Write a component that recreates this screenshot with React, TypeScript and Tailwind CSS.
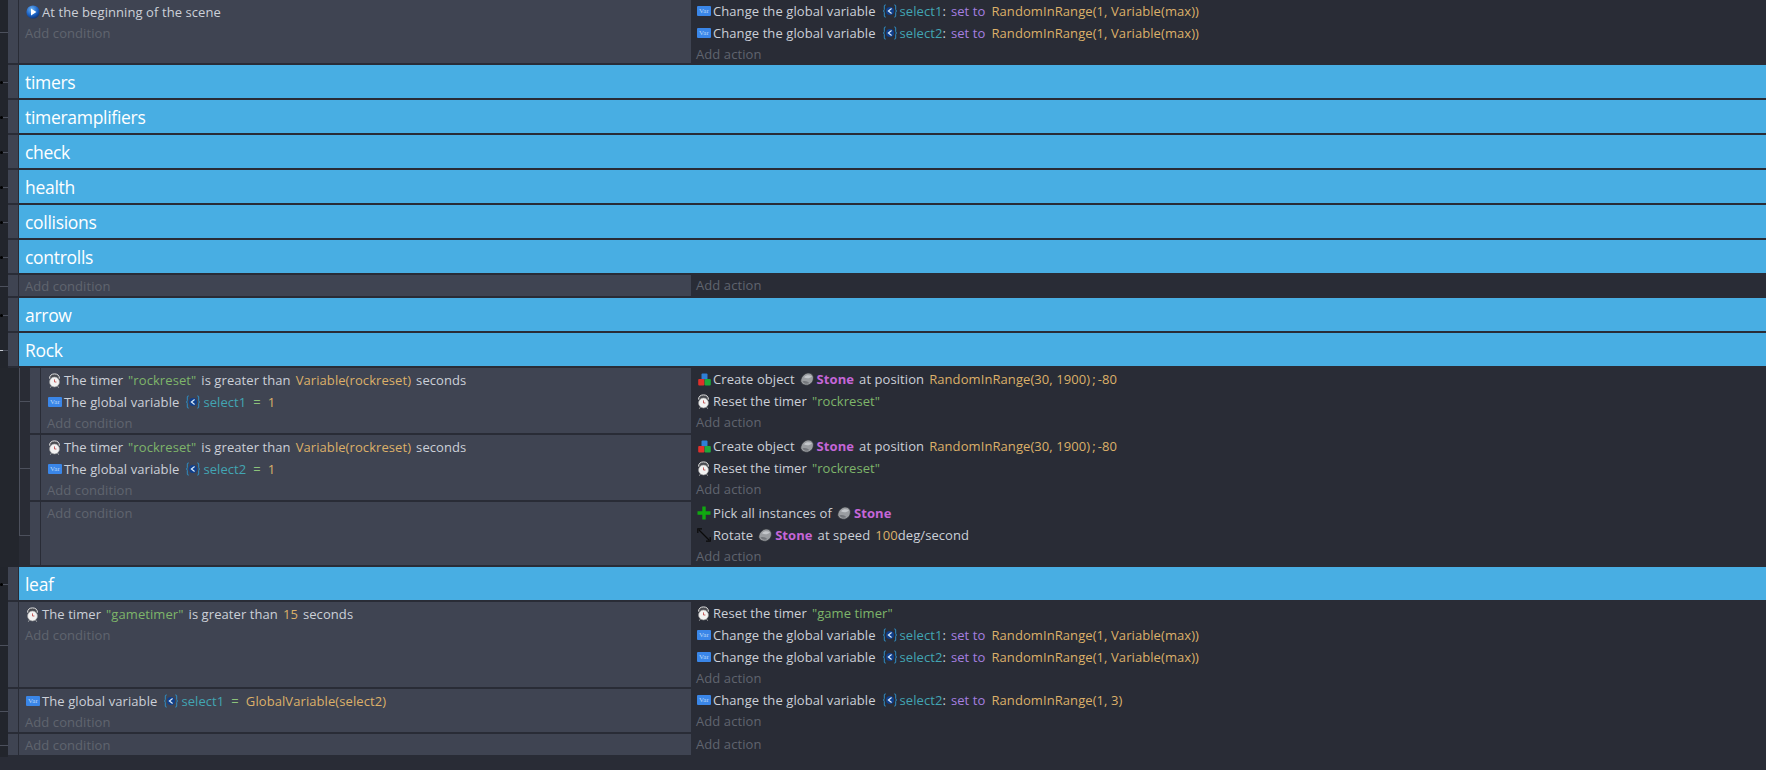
import React from "react";

const Var = () => (
    <svg width="14" height="10" viewBox="0 0 14 10" className="shrink-0 mr-[2px]">
        <rect width="14" height="10" rx="1" fill="#3a86e8" />
        <text x="7" y="7.4" fontSize="7" textAnchor="middle" fill="#b9d6f7" fontFamily="Liberation Serif, serif">Var</text>
    </svg>
);

const Timer = () => (
    <svg width="13" height="15" viewBox="0 0 13 15" className="shrink-0 mr-[3px]">
        <path d="M1.6 5.6 C1.4 2.6 3.4 0.9 6.5 0.9 C9.6 0.9 11.6 2.6 11.4 5.6" fill="#4a4c52" stroke="#e2e2e2" strokeWidth="1" />
        <circle cx="6.5" cy="9" r="4.9" fill="#f2f2f2" stroke="#a5a5a5" strokeWidth="0.6" />
        <path d="M6.5 6.4 V9 H8.4" fill="none" stroke="#c05050" strokeWidth="0.9" />
        <path d="M3.2 13.3 L2.4 14.6 M9.8 13.3 L10.6 14.6" stroke="#c8c8c8" strokeWidth="0.9" />
    </svg>
);

const Scope = () => (
    <svg width="14" height="14" viewBox="0 0 14 14" className="shrink-0 ml-[2px] mr-[3px]">
        <path d="M2.8 1 H2.1 Q1.3 1 1.3 2 V5.6 Q1.3 7 0.3 7 Q1.3 7 1.3 8.4 V12 Q1.3 13 2.1 13 H2.8" fill="none" stroke="#2e8dc4" strokeWidth="1" />
        <path d="M11.2 1 H11.9 Q12.7 1 12.7 2 V5.6 Q12.7 7 13.7 7 Q12.7 7 12.7 8.4 V12 Q12.7 13 11.9 13 H11.2" fill="none" stroke="#2e8dc4" strokeWidth="1" />
        <circle cx="7" cy="7" r="4" fill="#0f3f8c" />
        <path d="M8.6 4.6 L5.4 7 L8.6 9.4" fill="none" stroke="#d7e8f7" strokeWidth="1.2" />
    </svg>
);

const Stone = () => (
    <svg width="14" height="14" viewBox="0 0 14 14" className="shrink-0 mr-[3px]">
        <path d="M0.8 9.5 C0.5 6.5 2.5 3 6 1.4 C9 0.4 13.2 1.5 13.4 5.5 C13.6 9.5 11 12.6 7.5 13.2 C4.5 13.6 1.3 12 0.8 9.5 Z" fill="#9a9da1" stroke="#2f3238" strokeWidth="0.8" />
        <path d="M4 5.2 C6 3 9.5 2.6 12 4.6 C9.8 6.6 6.4 7 4 5.2 Z" fill="#c3c6ca" />
        <path d="M2.4 9.4 C5 8.4 7.4 9 9.4 11 C7.4 12.4 4 11.8 2.4 9.4 Z" fill="#74777c" />
    </svg>
);

const SceneStart = () => (
    <svg width="14" height="14" viewBox="0 0 14 14" className="shrink-0 mr-[2px]">
        <defs>
            <radialGradient id="ball" cx="40%" cy="30%" r="75%">
                <stop offset="0%" stopColor="#6fb4f2" />
                <stop offset="60%" stopColor="#1b62c4" />
                <stop offset="100%" stopColor="#0b2f70" />
            </radialGradient>
        </defs>
        <circle cx="7" cy="7" r="6.6" fill="url(#ball)" />
        <path d="M5 3.6 L10.4 7 L5 10.4 Z" fill="#ffffff" />
    </svg>
);

const CreateIcon = () => (
    <svg width="13" height="13" viewBox="0 0 13 13" className="shrink-0 mr-[2px]">
        <rect x="3.5" y="0.5" width="6" height="6" rx="1" fill="#2f7fd6" />
        <rect x="0.2" y="6" width="6.2" height="6.5" rx="1" fill="#e0302a" />
        <rect x="6.6" y="6" width="6.2" height="6.5" rx="1" fill="#1fa83a" />
    </svg>
);

const PlusIcon = () => (
    <svg width="14" height="14" viewBox="0 0 14 14" className="shrink-0 mr-[2px]">
        <path d="M5.3 0.5 H8.7 V5.3 H13.5 V8.7 H8.7 V13.5 H5.3 V8.7 H0.5 V5.3 H5.3 Z" fill="#10a810" />
    </svg>
);

const RotateIcon = () => (
    <svg width="14" height="14" viewBox="0 0 14 14" className="shrink-0 mr-[2px]">
        <path d="M2 2 L12 12 M0.8 5 V0.8 H5 M13.2 9 V13.2 H9" fill="none" stroke="#0a0a0a" strokeWidth="1.2" />
    </svg>
);

const T = ({ children }: { children: React.ReactNode }) => <span className="text-[#ccd0d8] mr-[5px]">{children}</span>;
const Str = ({ children }: { children: React.ReactNode }) => <span className="text-[#7eb56a] mr-[5px]">{children}</span>;
const Num = ({ children, tight }: { children: React.ReactNode; tight?: boolean }) => (
    <span className={tight ? "text-[#dcb069]" : "text-[#dcb069] mr-[5px]"}>{children}</span>
);
const Obj = () => (
    <>
        <Stone />
        <span className="text-[#c566d8] font-bold mr-[5px]">Stone</span>
    </>
);
const Global = ({ name }: { name: string }) => (
    <>
        <Scope />
        <span className="text-[#42a5b3]">{name}</span>
    </>
);

const Line = ({ children }: { children: React.ReactNode }) => (
    <div className="h-[22px] flex items-center whitespace-pre pl-px">{children}</div>
);

const SetVar = ({ name, value }: { name: string; value: string }) => (
    <Line>
        <Var />
        <T>Change the global variable</T>
        <Global name={name} />
        <span className="text-[#ccd0d8] mr-[5px]">:</span>
        <span className="text-[#a67fe0] mr-[6px]">set to</span>
        <Num>{value}</Num>
    </Line>
);

const AddCondition = () => <div className="h-5 flex items-center text-[#60646f]">Add condition</div>;
const AddAction = () => <div className="h-5 flex items-center text-[#60646f]">Add action</div>;

const Tick = ({ kind }: { kind?: "dot" | "open" }) => (
    <div className="w-2 shrink-0 bg-[#22252c] flex items-center">
        {kind === "dot" && <div className="w-[3px] h-[3px] rounded-full bg-black" />}
        {kind === "open" && <div className="w-[3px] h-px bg-[#c8ccd4]" />}
        <div className="h-px flex-1 bg-[#4c505c]" />
    </div>
);

const Group = ({ title, open }: { title: string; open?: boolean }) => (
    <div className="flex h-[35px]">
        <Tick kind={open ? "open" : "dot"} />
        <div className="flex flex-1 h-[33px]">
            <div className="w-[10px] bg-[#3f4452]" />
            <div className="w-px" />
            <div className="flex-1 bg-[#48aee3] text-white text-[17.5px] tracking-[-0.3px] pl-[6px] pt-[2px] flex items-center">{title}</div>
        </div>
    </div>
);

const Event = ({ height, conditions, actions }: { height: string; conditions: React.ReactNode; actions: React.ReactNode }) => (
    <div className={`flex ${height}`}>
        <Tick />
        <div className="flex flex-1 mb-[2px]">
            <div className="w-[10px] bg-[#3f4452]" />
            <div className="w-px" />
            <div className="w-[661px] bg-[#3f4452] pl-[6px] pt-px">{conditions}</div>
            <div className="w-[11px] bg-[#3f4452]" />
            <div className="flex-1 pl-[5px]">{actions}</div>
        </div>
    </div>
);

const SubEvent = ({ height, tree, conditions, actions }: { height: string; tree: React.ReactNode; conditions: React.ReactNode; actions: React.ReactNode }) => (
    <div className={`flex ${height}`}>
        <div className="w-[19px] shrink-0 bg-[#23262d]" />
        <div className="w-[11px] shrink-0 bg-[#292c35] flex flex-col">{tree}</div>
        <div className="flex flex-1 mb-[2px]">
            <div className="w-[10px] bg-[#3f4452]" />
            <div className="w-px" />
            <div className="w-[639px] bg-[#3f4452] pl-[6px] pt-px">{conditions}</div>
            <div className="w-[11px] bg-[#3f4452]" />
            <div className="flex-1 pl-[5px]">{actions}</div>
        </div>
    </div>
);

const RockTimer = ({ name }: { name: string }) => (
    <>
        <Line>
            <Timer />
            <T>The timer</T>
            <Str>"rockreset"</Str>
            <T>is greater than</T>
            <Num>Variable(rockreset)</Num>
            <T>seconds</T>
        </Line>
        <Line>
            <Var />
            <T>The global variable</T>
            <Global name={name} />
            <span className="text-[#8cc27a] mx-[7px]">=</span>
            <Num>1</Num>
        </Line>
        <AddCondition />
    </>
);

const RockActions = () => (
    <>
        <Line>
            <span className="ml-px" />
            <CreateIcon />
            <T>Create object</T>
            <Obj />
            <T>at position</T>
            <Num tight>RandomInRange(30, 1900)</Num>
            <span className="text-[#dcb069] ml-[2px] mr-[2px]">;</span>
            <span className="text-[#dcb069]">-80</span>
        </Line>
        <Line>
            <Timer />
            <T>Reset the timer</T>
            <Str>"rockreset"</Str>
        </Line>
        <AddAction />
    </>
);

export default function App() {
    return (
        <div className="w-[1766px] h-[770px] overflow-hidden bg-[#292c36] text-[13px] font-['Open_Sans',sans-serif] tracking-[0.08px] leading-none flex flex-col">
            <Event
                height="h-[65px]"
                conditions={
                    <>
                        <Line>
                            <SceneStart />
                            <T>At the beginning of the scene</T>
                        </Line>
                        <AddCondition />
                    </>
                }
                actions={
                    <>
                        <SetVar name="select1" value="RandomInRange(1, Variable(max))" />
                        <SetVar name="select2" value="RandomInRange(1, Variable(max))" />
                        <AddAction />
                    </>
                }
            />
            <Group title="timers" />
            <Group title="timeramplifiers" />
            <Group title="check" />
            <Group title="health" />
            <Group title="collisions" />
            <Group title="controlls" />
            <Event height="h-[23px]" conditions={<AddCondition />} actions={<AddAction />} />
            <Group title="arrow" />
            <Group title="Rock" open />
            <SubEvent
                height="h-[67px]"
                tree={
                    <>
                        <div className="h-[34px] border-l border-b border-[#4c505c]" />
                        <div className="flex-1 border-l border-[#4c505c]" />
                    </>
                }
                conditions={<RockTimer name="select1" />}
                actions={<RockActions />}
            />
            <SubEvent
                height="h-[67px]"
                tree={
                    <>
                        <div className="h-[34px] border-l border-b border-[#4c505c]" />
                        <div className="flex-1 border-l border-[#4c505c]" />
                    </>
                }
                conditions={<RockTimer name="select2" />}
                actions={<RockActions />}
            />
            <SubEvent
                height="h-[65px]"
                tree={<div className="h-[34px] border-l border-b border-[#4c505c]" />}
                conditions={<AddCondition />}
                actions={
                    <>
                        <Line>
                            <PlusIcon />
                            <T>Pick all instances of</T>
                            <Obj />
                        </Line>
                        <Line>
                            <RotateIcon />
                            <T>Rotate</T>
                            <Obj />
                            <T>at speed</T>
                            <Num tight>100</Num>
                            <T>deg/second</T>
                        </Line>
                        <AddAction />
                    </>
                }
            />
            <Group title="leaf" />
            <Event
                height="h-[87px]"
                conditions={
                    <>
                        <Line>
                            <Timer />
                            <T>The timer</T>
                            <Str>"gametimer"</Str>
                            <T>is greater than</T>
                            <Num>15</Num>
                            <T>seconds</T>
                        </Line>
                        <AddCondition />
                    </>
                }
                actions={
                    <>
                        <Line>
                            <Timer />
                            <T>Reset the timer</T>
                            <Str>"game timer"</Str>
                        </Line>
                        <SetVar name="select1" value="RandomInRange(1, Variable(max))" />
                        <SetVar name="select2" value="RandomInRange(1, Variable(max))" />
                        <AddAction />
                    </>
                }
            />
            <Event
                height="h-[45px]"
                conditions={
                    <>
                        <Line>
                            <Var />
                            <T>The global variable</T>
                            <Global name="select1" />
                            <span className="text-[#8cc27a] mx-[7px]">=</span>
                            <Num>GlobalVariable(select2)</Num>
                        </Line>
                        <AddCondition />
                    </>
                }
                actions={
                    <>
                        <SetVar name="select2" value="RandomInRange(1, 3)" />
                        <AddAction />
                    </>
                }
            />
            <Event height="h-[23px]" conditions={<AddCondition />} actions={<AddAction />} />
        </div>
    );
}
